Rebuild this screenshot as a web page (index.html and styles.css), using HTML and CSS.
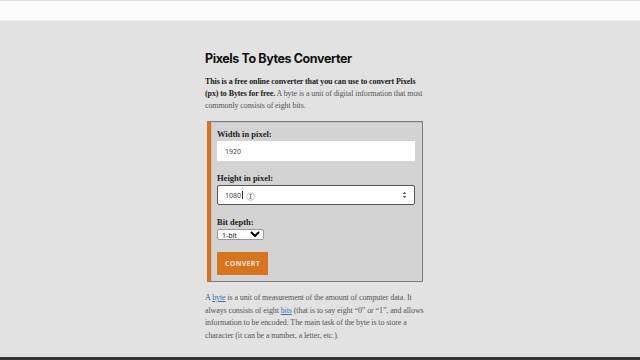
FILE: index.html
```html
<!DOCTYPE html>
<html lang="en">
<head>
    <title>Pixels To Bytes Converter</title>
    <link rel="stylesheet" href="styles.css">
</head>
<body>
    <div class="topbar"></div>

    <div class="page">
        <div class="content">
            <h1>Pixels To Bytes Converter</h1>

            <p class="intro"><strong>This is a free online converter that you can use to convert Pixels (px) to Bytes for free.</strong> A byte is a unit of digital information that most commonly consists of eight bits.</p>

            <div class="converter">
                <label for="width">Width in pixel:</label>
                <input id="width" class="field" type="text" value="1920">

                <label for="height">Height in pixel:</label>
                <div class="field focused">
                    <span class="value">1080<span class="caret"></span></span>
                    <svg class="pointer" width="9" height="9" viewBox="0 0 9 9">
                        <circle cx="4.5" cy="4.5" r="3.8" fill="none" stroke="#bbb" stroke-width="0.8"/>
                        <path d="M3.2 2.3h2.6M4.5 2.3v4.4M3.2 6.7h2.6" stroke="#666" stroke-width="0.7" fill="none"/>
                    </svg>
                    <svg class="spin" width="5" height="8" viewBox="0 0 5 8">
                        <path d="M2.5 1L4.2 3H0.8z M2.5 7L4.2 5H0.8z" fill="#444"/>
                    </svg>
                </div>

                <label for="depth">Bit depth:</label>
                <select id="depth" class="depth">
                    <option>1-bit</option>
                    <option>8-bit</option>
                    <option>24-bit</option>
                </select>

                <button class="convert">CONVERT</button>
            </div>

            <p class="outro">A <a href="#">byte</a> is a unit of measurement of the amount of computer data. It always consists of eight <a href="#">bits</a> (that is to say eight &ldquo;0&rdquo; or &ldquo;1&rdquo;, and allows information to be encoded. The main task of the byte is to store a character (it can be a number, a letter, etc.).</p>
        </div>
    </div>

    <div class="bottombar"></div>
</body>
</html>
```

FILE: styles.css
```css
:root {
    --bg-color: #e2e2e2;
    --box-color: #d3d3d3;
    --text-color: #222;
    --muted-color: #555;
    --accent-color: #d8731f;
}

body {
    margin: 0;
    background-color: var(--bg-color);
    color: var(--text-color);
    font-family: 'Liberation Serif', serif;
}

.topbar {
    height: 19px;
    background-color: #fcfcfc;
    border-top: 1px solid #e0e0e0;
    border-bottom: 1px solid #ececec;
}

.page {
    display: flex;
    justify-content: center;
    padding-right: 10px;
}

.content {
    width: 220px;
    padding-top: 30px;
}

h1 {
    font-family: Inter, sans-serif;
    font-size: 12.5px;
    font-weight: 700;
    letter-spacing: -0.4px;
    color: #111;
    margin: 0 0 10px;
}

p {
    font-size: 8px;
    line-height: 12px;
    letter-spacing: -0.1px;
    margin: 0;
    color: var(--muted-color);
}

.intro strong {
    color: #1a1a1a;
}

.intro {
    margin-bottom: 9px;
}

.converter {
    display: flex;
    flex-direction: column;
    align-items: flex-start;
    background-color: var(--box-color);
    border: 1px solid #7c7c7c;
    border-left: 4px solid var(--accent-color);
    box-shadow: inset 1px 1px 0 #c2c2c2;
    padding: 7px 8px 6px 6px;
    margin: 0 2px 10px;
}

label {
    font-size: 8.5px;
    line-height: 10px;
    font-weight: 700;
    color: #222;
    margin-bottom: 2px;
}

.field {
    box-sizing: border-box;
    width: 198px;
    height: 20px;
    border: none;
    background-color: #fff;
    font-family: 'Open Sans', sans-serif;
    font-size: 7px;
    color: #333;
    padding: 0 8px;
    margin: 0 0 12px;
}

.focused {
    position: relative;
    display: flex;
    align-items: center;
    justify-content: space-between;
    border: 1px solid #555;
    border-radius: 2px;
    padding: 0 7px;
}

.caret {
    display: inline-block;
    width: 1px;
    height: 8px;
    margin-left: 1px;
    vertical-align: -1px;
    background-color: #333;
}

.pointer {
    position: absolute;
    left: 28px;
    top: 6px;
}

.spin {
    display: block;
}

.depth {
    width: 47px;
    height: 11px;
    font-family: 'Open Sans', sans-serif;
    font-size: 7px;
    padding: 0;
    border: 1px solid #999;
    border-radius: 2px;
    background-color: #fff;
    margin-bottom: 12px;
}

.convert {
    width: 51px;
    height: 23px;
    background-color: var(--accent-color);
    color: #f8e6d4;
    border: none;
    font-family: 'Open Sans', sans-serif;
    font-size: 7px;
    font-weight: 700;
    letter-spacing: 0.3px;
    padding: 0;
    cursor: pointer;
}

.outro {
    line-height: 12.5px;
}

.outro a {
    color: #3a6fb0;
}

.bottombar {
    position: fixed;
    left: 0;
    right: 0;
    bottom: 0;
    height: 3px;
    background-color: #333;
}
```
